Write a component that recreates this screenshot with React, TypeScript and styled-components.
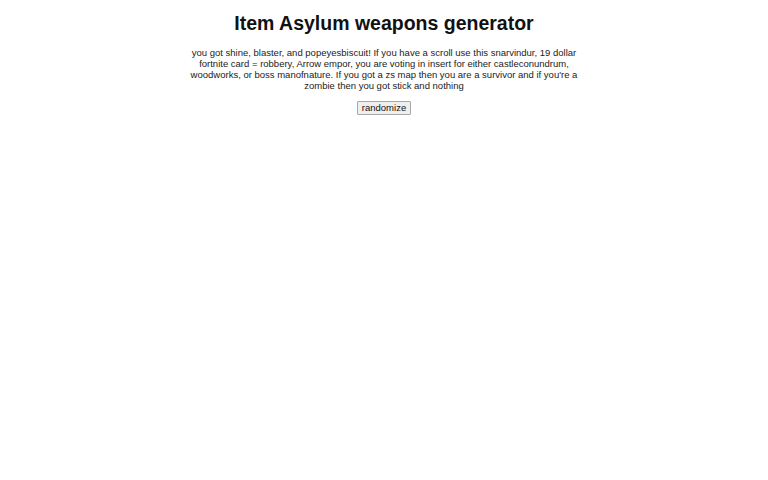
import * as React from 'react'
import styled, { createGlobalStyle } from 'styled-components'

const GlobalStyle = createGlobalStyle`
  html, body {
    margin: 0;
    padding: 0;
    background: #fff;
  }
  body {
    font-family: "Liberation Sans", Arial, sans-serif;
    color: #000;
  }
`

const Page = styled.main`
  display: flex;
  flex-direction: column;
  align-items: center;
  padding-top: 12px;
  text-align: center;
`

const Title = styled.h1`
  margin: 0;
  font-size: 19.5px;
  font-weight: bold;
  line-height: 22px;
  color: #111;
`

const Result = styled.p`
  margin: 13px 0 0;
  width: 392px;
  font-size: 9.5px;
  line-height: 11px;
  color: #222;
`

const RandomButton = styled.button`
  margin-top: 10px;
  padding: 0 4px;
  height: 14px;
  font-family: "Liberation Sans", Arial, sans-serif;
  font-size: 9.5px;
  line-height: 12px;
  color: #111;
  background: #efefef;
  border: 1px solid #a8a8a8;
  border-radius: 1px;
  cursor: pointer;
`

const pick = (items: string[]) => items[Math.floor(Math.random() * items.length)]

const defaultText =
  "you got shine, blaster, and popeyesbiscuit! If you have a scroll use this snarvindur, 19 dollar fortnite card = robbery, Arrow empor, you are voting in insert for either castleconundrum, woodworks, or boss manofnature. If you got a zs map then you are a survivor and if you're a zombie then you got stick and nothing"

const App = () => {
  const [text, setText] = React.useState(defaultText)

  const randomize = () => {
    const weapons = ['shine', 'blaster', 'popeyesbiscuit', 'snarvindur', 'stick']
    setText(
      `you got ${pick(weapons)}, ${pick(weapons)}, and ${pick(weapons)}! If you have a scroll use this ${pick(weapons)}`
    )
  }

  return (
    <>
      <GlobalStyle />
      <Page>
        <Title>Item Asylum weapons generator</Title>
        <Result>{text}</Result>
        <RandomButton onClick={randomize}>randomize</RandomButton>
      </Page>
    </>
  )
}

export default App
